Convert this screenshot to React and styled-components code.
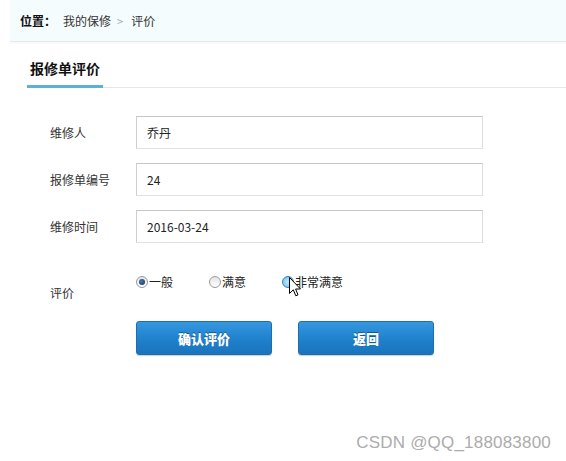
import React from "react";
import styled, { createGlobalStyle } from "styled-components";

const Global = createGlobalStyle`
  html, body { margin: 0; padding: 0; background: #fff; }
  body {
    width: 566px; height: 461px; overflow: hidden;
    font-family: "Noto Sans CJK SC", "DejaVu Sans", sans-serif;
    font-size: 12px; color: #333;
  }
`;

const Page = styled.div`
  position: relative;
  width: 566px;
  height: 461px;
`;

const Breadcrumb = styled.div`
  margin-left: 10px;
  height: 42px;
  background: #f4fcfd;
  border-bottom: 1px solid #e4e8e8;
  box-shadow: 0 2px 0 #fafafa;
  display: flex;
  align-items: center;
  padding-left: 10px;
  box-sizing: border-box;
  font-size: 12px;
  color: #333;
`;

const CrumbLabel = styled.span`
  font-weight: bold;
  color: #111;
  margin-right: 7px;
`;

const CrumbSep = styled.span`
  color: #aaa;
  margin: 0 8px 0 6px;
  font-size: 11px;
`;

const TabBar = styled.div`
  margin-left: 27px;
  height: 45px;
  border-bottom: 1px solid #e6e6e6;
  display: flex;
  align-items: flex-end;
`;

const Tab = styled.div`
  width: 76px;
  height: 42px;
  box-sizing: border-box;
  padding-left: 3px;
  padding-top: 14px;
  font-size: 14px;
  font-weight: bold;
  color: #111;
  border-bottom: 3px solid #5ab2d6;
  line-height: 16px;
  margin-bottom: -1px;
`;

const Form = styled.div`
  padding: 28px 0 0 50px;
  display: flex;
  flex-direction: column;
`;

const Row = styled.div`
  display: flex;
  align-items: ${(p) => (p.$top ? "flex-start" : "center")};
  margin-top: ${(p) => p.$mt ?? 0}px;
  margin-bottom: ${(p) => p.$mb ?? 14}px;
`;

const Label = styled.div`
  width: 86px;
  font-size: 12px;
  color: #333;
  line-height: 33px;
`;

const Field = styled.div`
  width: 347px;
  height: 33px;
  box-sizing: border-box;
  border: 1px solid #dcdcdc;
  border-top-color: #c6c6c6;
  border-left-color: #cfcfcf;
  border-bottom-color: #e2e2e2;
  padding-left: 10px;
  display: flex;
  align-items: center;
  font-size: 12px;
  color: #222;
  background: #fff;
`;

const Radios = styled.div`
  display: flex;
  align-items: center;
  gap: 36px;
  margin-top: -1px;
`;

const Option = styled.label`
  display: flex;
  align-items: center;
  font-size: 12px;
  color: #222;
  line-height: 14px;
`;

const Radio = styled.span`
  width: 12px;
  height: 12px;
  border-radius: 50%;
  box-sizing: border-box;
  border: 1px solid ${(p) => (p.$hover ? "#3b7fb4" : "#9a9a9a")};
  background: ${(p) =>
    p.$hover
      ? "radial-gradient(circle at 50% 50%, #bfe6fb 0%, #6cc3ef 100%)"
      : "linear-gradient(#e4e4e4, #ffffff)"};
  display: flex;
  align-items: center;
  justify-content: center;
  margin-right: 1px;
  &::after {
    content: "";
    display: ${(p) => (p.$checked ? "block" : "none")};
    width: 6px;
    height: 6px;
    border-radius: 50%;
    background: radial-gradient(circle at 40% 40%, #4a79b8, #0e2a56);
  }
`;

const Buttons = styled.div`
  display: flex;
  gap: 26px;
  margin-left: 86px;
  margin-top: 12px;
`;

const Button = styled.button`
  width: 136px;
  height: 34px;
  border: 1px solid #1b6fb0;
  border-radius: 3px;
  background: linear-gradient(#3598e0, #1f80cc 55%, #1a74bd);
  color: #fff;
  font-family: "Noto Sans CJK SC", sans-serif;
  font-size: 13px;
  font-weight: 900;
  text-shadow: 0 -1px 0 #145a92;
  box-shadow: 0 1px 1px rgba(0, 0, 0, 0.2);
  cursor: pointer;
  padding: 0;
`;

const Cursor = styled.svg`
  position: absolute;
  left: 289px;
  top: 277px;
`;

const Watermark = styled.div`
  position: absolute;
  right: 15px;
  bottom: 8px;
  font-family: "Liberation Sans", "DejaVu Sans", sans-serif;
  font-size: 17px;
  color: #acacac;
  letter-spacing: 0.2px;
`;

export default function App() {
  const fields = [
    ["维修人", "乔丹"],
    ["报修单编号", "24"],
    ["维修时间", "2016-03-24"],
  ];
  const options = [
    { text: "一般", checked: true },
    { text: "满意" },
    { text: "非常满意", hover: true },
  ];
  return (
    <Page>
      <Global />
      <Breadcrumb>
        <CrumbLabel>位置：</CrumbLabel>
        <span>我的保修</span>
        <CrumbSep>&gt;</CrumbSep>
        <span>评价</span>
      </Breadcrumb>
      <TabBar>
        <Tab>报修单评价</Tab>
      </TabBar>
      <Form>
        {fields.map(([l, v]) => (
          <Row key={l}>
            <Label>{l}</Label>
            <Field>{v}</Field>
          </Row>
        ))}
        <Row $top $mb={0} $mt={19}>
          <Label>评价</Label>
          <Radios>
            {options.map((o) => (
              <Option key={o.text}>
                <Radio $checked={o.checked} $hover={o.hover} />
                {o.text}
              </Option>
            ))}
          </Radios>
        </Row>
        <Buttons>
          <Button>确认评价</Button>
          <Button>返回</Button>
        </Buttons>
      </Form>
      <Cursor width="13" height="21" viewBox="0 0 13 21">
        <path
          d="M0.5 0.5 L0.5 16.5 L4.3 12.8 L6.8 18.8 L9 17.9 L6.6 12 L11.5 12 Z"
          fill="#fff"
          stroke="#000"
          strokeWidth="1"
          strokeLinejoin="round"
        />
      </Cursor>
      <Watermark>CSDN @QQ_188083800</Watermark>
    </Page>
  );
}
